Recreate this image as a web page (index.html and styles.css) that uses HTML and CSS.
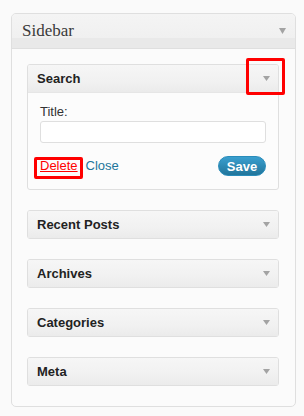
FILE: index.html
```html
<!DOCTYPE html>
<html lang="en">
<head>
    <meta charset="UTF-8">
    <title>Widgets - Sidebar</title>
    <link rel="stylesheet" href="styles.css">
</head>
<body>
    <div class="sidebar-panel">
        <div class="sidebar-name">
            <h3>Sidebar</h3>
            <svg class="arrow" width="7" height="6" viewBox="0 0 7 6"><polygon points="0,0 7,0 3.5,6" /></svg>
        </div>

        <div class="widgets-list">
            <!-- open widget -->
            <div class="widget open">
                <div class="widget-top">
                    <h4>Search</h4>
                    <svg class="arrow" width="7" height="5" viewBox="0 0 7 5"><polygon points="0,0 7,0 3.5,5" /></svg>
                    <span class="callout arrow-callout"></span>
                </div>
                <div class="widget-inside">
                    <label class="field-label" for="searchTitle">Title:</label>
                    <input class="field-input" type="text" id="searchTitle">
                    <div class="widget-control-actions">
                        <div class="control-links">
                            <a class="control-remove" href="#remove">Delete<span class="callout"></span></a>
                            <a class="control-close" href="#close">Close</a>
                        </div>
                        <button class="save-btn">Save</button>
                    </div>
                </div>
            </div>

            <div class="widget">
                <div class="widget-top">
                    <h4>Recent Posts</h4>
                    <svg class="arrow" width="7" height="5" viewBox="0 0 7 5"><polygon points="0,0 7,0 3.5,5" /></svg>
                </div>
            </div>
            <div class="widget">
                <div class="widget-top">
                    <h4>Archives</h4>
                    <svg class="arrow" width="7" height="5" viewBox="0 0 7 5"><polygon points="0,0 7,0 3.5,5" /></svg>
                </div>
            </div>
            <div class="widget">
                <div class="widget-top">
                    <h4>Categories</h4>
                    <svg class="arrow" width="7" height="5" viewBox="0 0 7 5"><polygon points="0,0 7,0 3.5,5" /></svg>
                </div>
            </div>
            <div class="widget">
                <div class="widget-top">
                    <h4>Meta</h4>
                    <svg class="arrow" width="7" height="5" viewBox="0 0 7 5"><polygon points="0,0 7,0 3.5,5" /></svg>
                </div>
            </div>
        </div>
    </div>
</body>
</html>
```

FILE: styles.css
```css
* {
    margin: 0;
    padding: 0;
    box-sizing: border-box;
}

body {
    background: #fafafa;
    font-family: 'Liberation Sans', Arial, sans-serif;
    font-size: 13px;
    color: #333;
    padding: 13px 9px 0 11px;
}

.sidebar-panel {
    width: 285px;
    border: 1px solid #dfdfdf;
    border-radius: 5px;
    background: #fbfbfb;
}

.sidebar-name {
    height: 35px;
    display: flex;
    align-items: center;
    justify-content: space-between;
    padding: 0 9px 0 10px;
    background: linear-gradient(to bottom, #f4f4f4, #f0f0f0 70%, #e9e9e9 72%, #e9e9e9);
    border-bottom: 1px solid #dfdfdf;
    border-radius: 4px 4px 0 0;
}

.sidebar-name h3 {
    font-family: 'Liberation Serif', Georgia, serif;
    font-weight: normal;
    font-size: 17px;
    color: #3a3a3a;
}

.arrow polygon {
    fill: #a3a3a3;
}

.widgets-list {
    display: flex;
    flex-direction: column;
    gap: 20px;
    padding: 15px 16px 20px 15px;
}

.widget {
    border: 1px solid #dfdfdf;
    border-radius: 3px;
    background: #fcfcfc;
}

.widget-top {
    position: relative;
    height: 27px;
    display: flex;
    align-items: center;
    justify-content: space-between;
    padding: 0 8px 0 9px;
    background: linear-gradient(to bottom, #f6f6f6, #f1f1f1 60%, #ebebeb);
    border-radius: 2px 2px 0 0;
}

.widget-top h4 {
    font-size: 13px;
    font-weight: bold;
    color: #222;
}

.widget-inside {
    border-top: 1px solid #e6e6e6;
    padding: 11px 12px 13px 12px;
    display: flex;
    flex-direction: column;
}

.field-label {
    line-height: 16px;
    color: #333;
}

.field-input {
    margin-top: 1px;
    height: 22px;
    border: 1px solid #dfdfdf;
    border-radius: 3px;
    background: #fff;
}

.widget-control-actions {
    margin-top: 13px;
    display: flex;
    align-items: center;
    justify-content: space-between;
}

.control-links {
    display: flex;
    gap: 8px;
    line-height: 20px;
}

.control-remove {
    position: relative;
    color: #f00;
}

.control-close {
    color: #21759b;
    text-decoration: none;
}

.save-btn {
    width: 48px;
    height: 20px;
    border: 1px solid #298cba;
    border-radius: 11px;
    background: linear-gradient(to bottom, #3a9fcf, #21759b);
    color: #fff;
    font-family: 'Liberation Sans', Arial, sans-serif;
    font-size: 13px;
    font-weight: bold;
}

/* red annotation boxes */
.callout {
    position: absolute;
    border: 3px solid #f00;
    border-radius: 2px;
}

.control-remove .callout {
    top: 1px;
    bottom: -3px;
    left: -6px;
    right: -5px;
}

.arrow-callout {
    top: -7px;
    right: -7px;
    width: 39px;
    height: 37px;
}
```
